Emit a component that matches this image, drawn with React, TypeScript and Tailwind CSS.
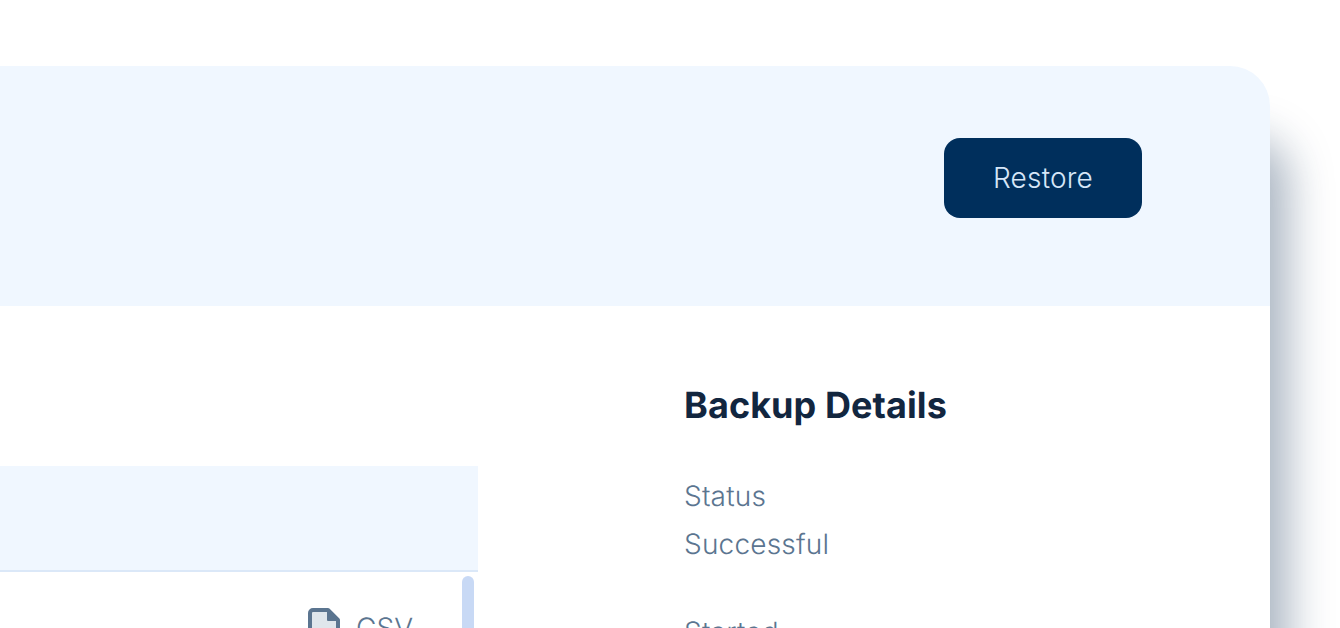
const DETAILS = [
  { label: "Status", value: "Successful" },
  { label: "Started", value: "Today" },
];

function FileIcon() {
  return (
    <svg width="32" height="40" viewBox="0 0 32 40" className="shrink-0">
      <path
        d="M5 2h15l10 10v23a3 3 0 0 1-3 3H5a3 3 0 0 1-3-3V5a3 3 0 0 1 3-3z"
        fill="#dfe6ec"
        stroke="#5b7590"
        strokeWidth="4"
        strokeLinejoin="round"
      />
      <path d="M20 2v10h10z" fill="#5b7590" stroke="#5b7590" strokeWidth="2" strokeLinejoin="round" />
    </svg>
  );
}

export default function App() {
  return (
    <div className="h-[628px] overflow-hidden bg-white font-['Inter',sans-serif] font-[350] tracking-[0.2px] [text-rendering:geometricPrecision]">
      <div className="ml-[-130px] mt-[66px] h-[700px] w-[1400px] rounded-[40px] bg-white shadow-[18px_72px_44px_rgba(18,48,82,0.36)]">
        <div className="flex h-[240px] items-start justify-end rounded-t-[40px] bg-[#f0f7ff] pr-[128px] pt-[72px]">
          <button className="h-[80px] w-[198px] rounded-2xl bg-[#002f5c] text-[28px] text-[#d6e6f8]">
            Restore
          </button>
        </div>
        <div className="flex">
          <div className="w-[608px] pt-[160px]">
            <div className="h-[106px] border-b-2 border-[#dbe8f8] bg-[#f0f7ff]" />
            <div className="relative flex items-center justify-end gap-4 pr-[65px] pt-[36px]">
              <FileIcon />
              <span className="text-[28px] leading-[40px] tracking-normal text-[#5b7590]">CSV</span>
              <div className="absolute right-1 top-1 h-[300px] w-3 rounded-md bg-[#c8d9f5]" />
            </div>
          </div>
          <div className="ml-[206px] pt-[75px]">
            <h2 className="text-[36px] font-bold leading-[48px] tracking-[0.08px] text-[#12263f]">Backup Details</h2>
            <dl className="mt-[43px] flex flex-col gap-[40px]">
              {DETAILS.map((d) => (
                <div key={d.label} className="text-[28px] leading-[48px] text-[#5b7590]">
                  <dt>{d.label}</dt>
                  <dd>{d.value}</dd>
                </div>
              ))}
            </dl>
          </div>
        </div>
      </div>
    </div>
  );
}
